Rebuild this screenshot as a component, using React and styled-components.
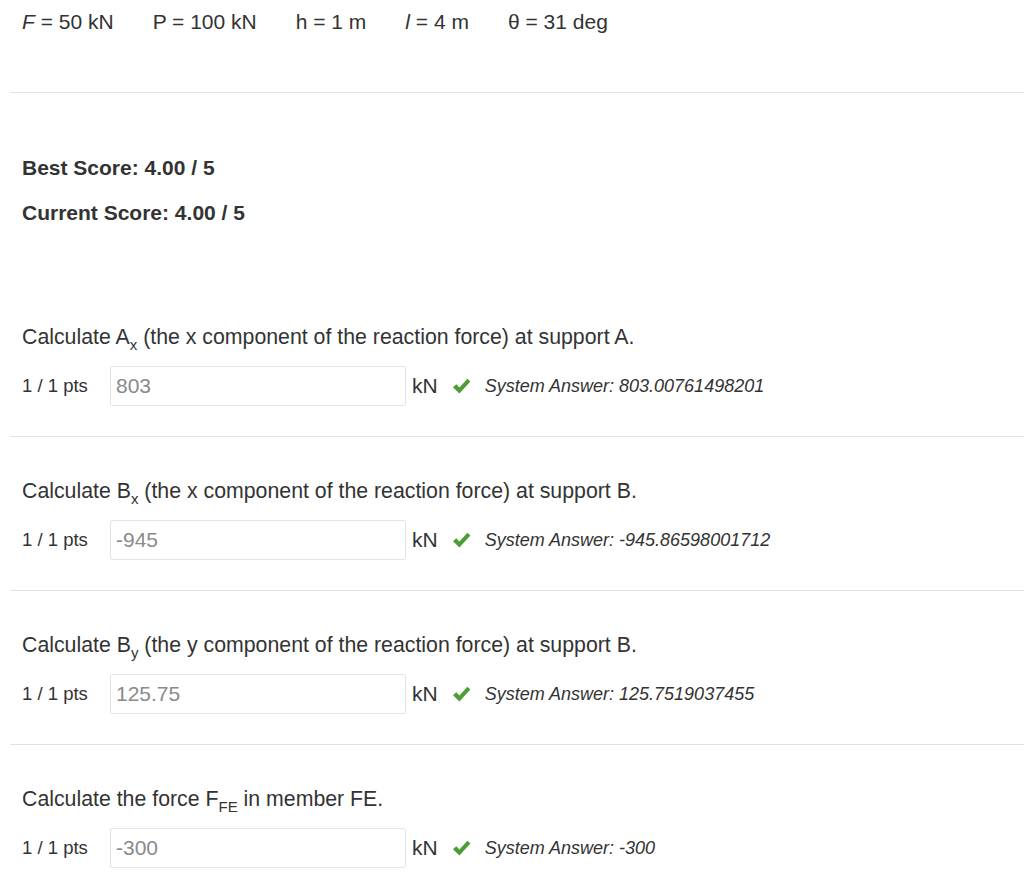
import React from "react";
import styled, { createGlobalStyle } from "styled-components";

const GlobalStyle = createGlobalStyle`
  body {
    margin: 0;
    background: #fff;
    font-family: "Liberation Sans", Arial, sans-serif;
    color: #333;
  }
`;

const questions = [
  { pre: "Calculate A", sub: "x", post: " (the x component of the reaction force) at support A.", value: "803", answer: "803.00761498201" },
  { pre: "Calculate B", sub: "x", post: " (the x component of the reaction force) at support B.", value: "-945", answer: "-945.86598001712" },
  { pre: "Calculate B", sub: "y", post: " (the y component of the reaction force) at support B.", value: "125.75", answer: "125.7519037455" },
  { pre: "Calculate the force F", sub: "FE", post: " in member FE.", value: "-300", answer: "-300" },
];

const Check = () => (
  <svg width="19" height="17" viewBox="0 0 19 17">
    <path d="M1 9.2 L4.3 6.2 L7.4 9.4 L15.4 0.8 L18.4 3.6 L7.4 15.4 Z" fill="#4c9e33" />
  </svg>
);

const App = () => (
  <Page>
    <GlobalStyle />
    <Params>
      <Param><i>F</i> = 50 kN</Param>
      <Param>P = 100 kN</Param>
      <Param>h = 1 m</Param>
      <Param><i>l</i> = 4 m</Param>
      <Param>θ = 31 deg</Param>
    </Params>
    <Divider />
    <Scores>
      <Score>Best Score: 4.00 / 5</Score>
      <Score>Current Score: 4.00 / 5</Score>
    </Scores>
    {questions.map((q, i) => (
      <Question key={i} $first={i === 0} $last={i === questions.length - 1}>
        <Prompt>
          {q.pre}
          <sub>{q.sub}</sub>
          {q.post}
        </Prompt>
        <AnswerRow>
          <Pts>1 / 1 pts</Pts>
          <Input readOnly value={q.value} />
          <Unit>kN</Unit>
          <Check />
          <SystemAnswer>System Answer: {q.answer}</SystemAnswer>
        </AnswerRow>
      </Question>
    ))}
  </Page>
);

export default App;

const Page = styled.div`
  padding-left: 10px;
  width: 1014px;
`;

const Params = styled.div`
  display: flex;
  gap: 39px;
  padding: 10px 0 0 12px;
  height: 24px;
  margin-bottom: 58px;
  font-size: 21px;
  line-height: 24px;
`;

const Param = styled.span`
  white-space: pre;
`;

const Divider = styled.div`
  height: 1px;
  background: #e2e2e2;
`;

const Scores = styled.div`
  padding: 63px 0 0 12px;
  display: flex;
  flex-direction: column;
  gap: 21px;
`;

const Score = styled.div`
  font-size: 21px;
  line-height: 24px;
  font-weight: bold;
  color: #333;
`;

const Question = styled.div`
  padding: ${(p) => (p.$first ? "100px" : "42px")} 0 30px 12px;
  border-bottom: ${(p) => (p.$last ? "none" : "1px solid #e2e2e2")};
`;

const Prompt = styled.div`
  font-size: 21.3px;
  line-height: 24px;
  height: 24px;
  sub {
    font-size: 15px;
    vertical-align: -6px;
    line-height: 0;
  }
`;

const AnswerRow = styled.div`
  display: flex;
  align-items: center;
  margin-top: 17px;
  height: 40px;
`;

const Pts = styled.span`
  font-size: 18.5px;
  width: 88px;
  color: #333;
`;

const Input = styled.input`
  box-sizing: border-box;
  width: 296px;
  height: 40px;
  border: 1px solid #e4e4e4;
  border-radius: 2px;
  padding: 0 5px;
  font-family: "Liberation Sans", Arial, sans-serif;
  font-size: 21px;
  color: #8a8a8a;
  outline: none;
`;

const Unit = styled.span`
  font-size: 21px;
  margin: 0 14px 0 6px;
`;

const SystemAnswer = styled.span`
  font-size: 18px;
  font-style: italic;
  margin-left: 14px;
  color: #333;
`;
